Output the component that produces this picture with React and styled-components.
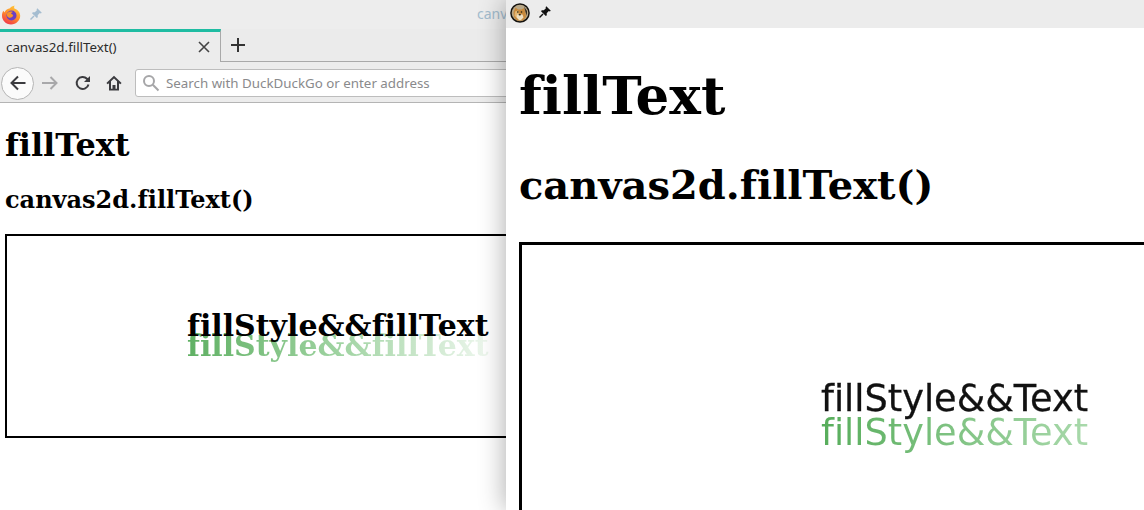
import React from 'react';
import styled, { createGlobalStyle } from 'styled-components';

const Global = createGlobalStyle`
	html, body { margin: 0; padding: 0; background: #fff; }
	#root { width: 1144px; height: 510px; overflow: hidden; }
	svg { flex: none; }
`;

function FirefoxLogo() {
	return (
		<svg width="20" height="20" viewBox="0 0 20 20">
			<defs>
				<linearGradient id="ffg" x1="0.7" y1="0" x2="0.2" y2="1">
					<stop offset="0" stopColor="#ffc83a" />
					<stop offset="0.5" stopColor="#ff8a2b" />
					<stop offset="1" stopColor="#f0304f" />
				</linearGradient>
			</defs>
			<path d="M10 19.4C4.8 19.4 1 15.6 1 10.8 1 8.8 1.5 7 2.4 5.8l1 1.6C4.6 5 6.8 3.6 9 3.2 9.6 2.2 12 1 13.6.6c-.6 1.2-.6 2.2-.2 3 3 1 5.8 3.6 5.8 7.2 0 4.8-4 8.6-9.2 8.6z" fill="url(#ffg)" />
			<circle cx="10.5" cy="10.5" r="5" fill="#6a3fc4" />
			<path d="M6 8.5c1.5-2 4-2.5 6-1.5-1 .4-1.8 1-2 1.8 1.2.4 2 1 2.2 2-1 2-3.5 2.4-5 1.4C6 11.5 5.6 10 6 8.5z" fill="#f7942c" />
		</svg>
	);
}

function DogeLogo() {
	return (
		<svg width="20" height="20" viewBox="0 0 20 20">
			<circle cx="10" cy="10" r="9.8" fill="#16130f" />
			<circle cx="10" cy="10" r="8.3" fill="#b9a888" />
			<path d="M3.5 9 5.5 4.5 8 6.5h3.5L14 5l1.5 4 .5 5-3 3.5H7L4 14z" fill="#c98a3c" />
			<path d="M5 8.5 8 7.5 9 11 7 14.5 4.5 13z" fill="#e3b673" />
			<path d="M7 11.5h5.5l1 3-2.5 2.5H9l-2.500-2.500z" fill="#f0e0c2" />
			<circle cx="7.8" cy="9" r=".8" fill="#221" />
			<circle cx="11.5" cy="9" r=".8" fill="#221" />
			<ellipse cx="9.8" cy="11.8" rx="1.2" ry=".8" fill="#221" />
			<path d="M14 3.5 17 8 17 13 15.5 9z" fill="#3b2f20" />
		</svg>
	);
}

function PinIcon({ color }) {
	return (
		<svg width="14" height="14" viewBox="0 0 14 14">
			<path d="M8.3 1.2 12.8 5.7 11.8 6.4 10.8 6.1 8.7 8.2 8.8 10.2 7.8 11 3 6.2 3.8 5.2 5.8 5.3 7.9 3.2 7.6 2.2z" fill={color} />
			<path d="M5 9 1.5 12.5" stroke={color} strokeWidth="1.5" />
		</svg>
	);
}

function BackIcon() {
	return (
		<svg width="18" height="18" viewBox="0 0 18 18" fill="none" stroke="#3b3b3f" strokeWidth="2">
			<path d="M16.5 9H2.5M9 2.5 2.5 9 9 15.5" />
		</svg>
	);
}

function ForwardIcon() {
	return (
		<svg width="18" height="18" viewBox="0 0 18 18" fill="none" stroke="#a8a8aa" strokeWidth="2">
			<path d="M1 9h14.5M9.5 3l6 6-6 6" />
		</svg>
	);
}

function ReloadIcon() {
	return (
		<svg width="16" height="16" viewBox="0 0 16 16" fill="none" stroke="#3b3b3f" strokeWidth="2">
			<path d="M13.5 9.5A6 6 0 1 1 12 3.8L14 6" />
			<path d="M15 1v6H9" fill="#3b3b3f" stroke="none" />
		</svg>
	);
}

function HomeIcon() {
	return (
		<svg width="16" height="16" viewBox="0 0 16 16">
			<path d="M8 .8 .4 8l1.3 1.3L3 8.2V15.5h10V8.2l1.3 1.1L15.6 8zM8 3.4l3 2.8v7.6H9.5V10h-3v3.8H5V6.2z" fill="#3b3b3f" />
		</svg>
	);
}

function SearchIcon() {
	return (
		<svg width="18" height="18" viewBox="0 0 18 18" fill="none" stroke="#a6a6a8" strokeWidth="2">
			<circle cx="7" cy="7" r="5" />
			<path d="M10.8 10.8 16.5 16.5" />
		</svg>
	);
}

function App() {
	return (
		<Desktop>
			<Global />
			<LeftWindow>
				<TitleBar>
					<FirefoxLogo />
					<PinSlot><PinIcon color="#a5bdd0" /></PinSlot>
					<WindowTitle>canv</WindowTitle>
				</TitleBar>
				<TabStrip>
					<Tab>
						<TabLabel>canvas2d.fillText()</TabLabel>
						<TabClose>
							<svg width="12" height="12" viewBox="0 0 12 12" stroke="#444" strokeWidth="1.6">
								<path d="M1 1l10 10M11 1 1 11" />
							</svg>
						</TabClose>
					</Tab>
					<NewTab>
						<svg width="16" height="16" viewBox="0 0 16 16" stroke="#333" strokeWidth="2">
							<path d="M8 1v14M1 8h14" />
						</svg>
					</NewTab>
				</TabStrip>
				<NavBar>
					<BackButton><BackIcon /></BackButton>
					<NavIcon $w={32}><ForwardIcon /></NavIcon>
					<NavIcon $w={34}><ReloadIcon /></NavIcon>
					<NavIcon $w={28}><HomeIcon /></NavIcon>
					<UrlBar>
						<SearchIcon />
						<UrlText>Search with DuckDuckGo or enter address</UrlText>
					</UrlBar>
				</NavBar>
				<LeftPage>
					<LeftH1>fillText</LeftH1>
					<LeftH2>canvas2d.fillText()</LeftH2>
					<LeftCanvas>
						<SerifLine>fillStyle&amp;&amp;fillText</SerifLine>
						<SerifLine $green>fillStyle&amp;&amp;fillText</SerifLine>
					</LeftCanvas>
				</LeftPage>
			</LeftWindow>
			<RightWindow>
				<RightBar>
					<DogeLogo />
					<PinSlot><PinIcon color="#111" /></PinSlot>
				</RightBar>
				<RightPage>
					<RightH1>fillText</RightH1>
					<RightH2>canvas2d.fillText()</RightH2>
					<RightCanvas>
						<SansLine>fillStyle&amp;&amp;Text</SansLine>
						<SansLine $green>fillStyle&amp;&amp;Text</SansLine>
					</RightCanvas>
				</RightPage>
			</RightWindow>
		</Desktop>
	);
}

export default App;

const Desktop = styled.div`
	display: flex;
	width: 1144px;
	height: 510px;
	overflow: hidden;
	font-variant-ligatures: none;
`;

const LeftWindow = styled.div`
	width: 506px;
	flex: none;
	display: flex;
	flex-direction: column;
	background: #fff;
	overflow: hidden;
`;

const TitleBar = styled.div`
	height: 29px;
	flex: none;
	display: flex;
	align-items: center;
	padding-left: 1px;
	background: #ededed;
	box-sizing: border-box;
	white-space: nowrap;
`;

const PinSlot = styled.div`
	display: flex;
	margin: 0 0 2px 8px;
`;

const WindowTitle = styled.div`
	margin: 0 0 2px 434px;
	font-family: 'Noto Sans', sans-serif;
	font-size: 14px;
	color: #a3bccd;
`;

const TabStrip = styled.div`
	height: 32px;
	flex: none;
	display: flex;
	background: #ebebeb;
	border-bottom: 1px solid #a9a9a9;
	box-sizing: content-box;
`;

const Tab = styled.div`
	width: 221px;
	height: 33px;
	flex: none;
	box-sizing: border-box;
	display: flex;
	align-items: center;
	justify-content: space-between;
	padding: 0 5px 0 6px;
	background: #ececec;
	border-top: 3px solid #1fbca2;
	border-right: 1px solid #a9a9a9;
`;

const TabLabel = styled.span`
	font-family: 'Noto Sans', sans-serif;
	font-size: 13.33px;
	color: #2c2c2c;
`;

const TabClose = styled.span`
	display: flex;
	margin-right: 5px;
`;

const NewTab = styled.div`
	width: 34px;
	display: flex;
	align-items: center;
	justify-content: center;
`;

const NavBar = styled.div`
	height: 38px;
	padding-top: 2px;
	flex: none;
	display: flex;
	align-items: center;
	background: #ececec;
	border-bottom: 1px solid #b4b4b4;
`;

const BackButton = styled.div`
	width: 33px;
	height: 33px;
	flex: none;
	margin-left: 1px;
	border: 1px solid #b5b5b5;
	border-radius: 50%;
	background: #fbfbfb;
	display: flex;
	align-items: center;
	justify-content: center;
	box-sizing: border-box;
`;

const NavIcon = styled.div`
	width: ${(props) => props.$w}px;
	flex: none;
	display: flex;
	align-items: center;
	justify-content: center;
`;

const UrlBar = styled.div`
	width: 420px;
	height: 28px;
	flex: none;
	margin-left: 7px;
	padding-left: 6px;
	box-sizing: border-box;
	display: flex;
	align-items: center;
	background: #fff;
	border: 1px solid #bdbdbd;
	border-radius: 3px;
`;

const UrlText = styled.span`
	margin-left: 6px;
	font-family: 'Noto Sans', sans-serif;
	font-size: 13.33px;
	color: #8a8a8c;
	white-space: nowrap;
`;

const LeftPage = styled.div`
	flex: 1;
	padding: 0 0 0 5px;
	background: #fff;
	font-family: 'DejaVu Serif', serif;
	color: #000;
`;

const LeftH1 = styled.h1`
	margin: 23px 0 0;
	font-size: 32px;
	line-height: 38px;
`;

const LeftH2 = styled.h2`
	margin: 22px 0 0;
	font-size: 24px;
	line-height: 28px;
`;

const LeftCanvas = styled.div`
	width: 640px;
	height: 120px;
	margin-top: 20px;
	border: 2px solid #000;
	padding: 80px 0 0 180px;
	box-sizing: content-box;
`;

const SerifLine = styled.div`
	width: fit-content;
	font-size: 30px;
	font-weight: bold;
	line-height: 20px;
	white-space: nowrap;
	color: #000;
	${(props) =>
		props.$green &&
		`
		color: transparent;
		background: linear-gradient(90deg, #5fb063 0%, #9fd3a1 50%, #eef7ee 100%);
		-webkit-background-clip: text;
		background-clip: text;
		line-height: 38px;
		margin-top: -9px;
	`}
`;

const RightWindow = styled.div`
	flex: 1;
	min-width: 0;
	position: relative;
	display: flex;
	flex-direction: column;
	background: #fff;
	box-shadow: -2px 0 24px rgba(0, 0, 0, 0.3);
	overflow: visible;
`;

const RightBar = styled.div`
	height: 28px;
	flex: none;
	display: flex;
	align-items: center;
	padding: 0 0 3px 4px;
	box-sizing: border-box;
	background: #ececec;
`;

const RightPage = styled.div`
	flex: 1;
	min-height: 0;
	overflow: hidden;
	padding-left: 13px;
	font-family: 'DejaVu Serif', serif;
	color: #000;
`;

const RightH1 = styled.h1`
	margin: 36px 0 0;
	font-size: 53px;
	line-height: 62px;
`;

const RightH2 = styled.h2`
	margin: 36px 0 0;
	font-size: 40px;
	line-height: 46px;
`;

const RightCanvas = styled.div`
	width: 1056px;
	height: 300px;
	margin-top: 34px;
	border: 3px solid #000;
	padding: 137px 0 0 299px;
`;

const SansLine = styled.div`
	width: fit-content;
	font-family: 'DejaVu Sans', sans-serif;
	font-size: 36.7px;
	line-height: 34px;
	white-space: nowrap;
	color: #111;
	-webkit-text-stroke: 0.3px #111;
	filter: blur(0.7px);
	${(props) =>
		props.$green &&
		`
		color: transparent;
		-webkit-text-stroke: 0;
		background: linear-gradient(90deg, #57ad5b 0%, #a9d9ab 100%);
		-webkit-background-clip: text;
		background-clip: text;
		padding-bottom: 10px;
	`}
`;
